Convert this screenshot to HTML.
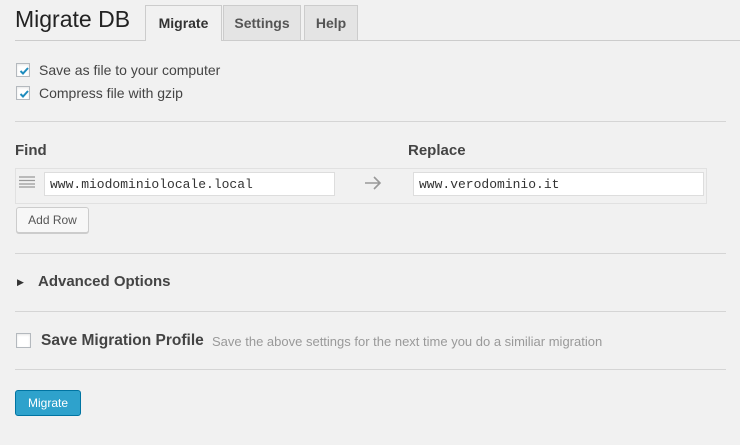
<!DOCTYPE html>
<html><head><style>
body{margin:0;width:740px;height:445px;background:#f1f1f1;font-family:"Liberation Sans",sans-serif;color:#444;position:relative;overflow:hidden}
.a{position:absolute}
.tab{position:absolute;top:5px;height:35px;box-sizing:border-box;border:1px solid #ccc;border-bottom:none;background:#e4e4e4;font-weight:bold;font-size:14px;color:#555;text-align:center;line-height:35px}
.cb{position:absolute;width:14px;height:14px;border:1px solid #b4b9be;background:#fff;box-sizing:border-box;box-shadow:inset 0 1px 2px rgba(0,0,0,.1)}
.cb svg{position:absolute;left:1px;top:1px}
.hr{position:absolute;left:15px;right:14px;height:1px;background:#d5d5d5}
.inp{position:absolute;height:24px;box-sizing:border-box;border:1px solid #ddd;background:#fff;font-family:"Liberation Mono",monospace;font-size:13px;color:#333;line-height:23px;padding-left:5px}
</style></head><body>
<div class="a" style="left:15px;top:6px;font-size:23px;color:#222">Migrate DB</div>
<div class="a" style="left:15px;right:0;top:40px;height:1px;background:#ccc"></div>
<div class="tab" style="left:145px;width:77px;background:#f1f1f1;height:36px;color:#333">Migrate</div>
<div class="tab" style="left:223px;width:78px">Settings</div>
<div class="tab" style="left:304px;width:54px">Help</div>

<div class="cb" style="left:16px;top:63px"><svg width="12" height="12"><path d="M2.5 6l2.5 2.5 5-5.5" stroke="#1e8cbe" stroke-width="2" fill="none"/></svg></div>
<div class="a" style="left:39px;top:62px;font-size:14px">Save as file to your computer</div>
<div class="cb" style="left:16px;top:86px"><svg width="12" height="12"><path d="M2.5 6l2.5 2.5 5-5.5" stroke="#1e8cbe" stroke-width="2" fill="none"/></svg></div>
<div class="a" style="left:39px;top:85px;font-size:14px">Compress file with gzip</div>

<div class="hr" style="top:121px"></div>
<div class="a" style="left:15px;top:142px;font-size:15px;font-weight:bold">Find</div>
<div class="a" style="left:408px;top:142px;font-size:15px;font-weight:bold">Replace</div>
<div class="a" style="left:15px;top:168px;width:692px;height:36px;box-sizing:border-box;border:1px solid #e1e1e1"></div>
<svg class="a" style="left:19px;top:176px" width="16" height="12"><path d="M0 1h16M0 4.5h16M0 8h16M0 11h16" stroke="#999" stroke-width="1.2"/></svg>
<div class="inp" style="left:44px;top:172px;width:291px">www.miodominiolocale.local</div>
<svg class="a" style="left:364px;top:175px" width="18" height="16"><path d="M1 8h15M10 2l6 6-6 6" stroke="#999" stroke-width="1.6" fill="none"/></svg>
<div class="inp" style="left:413px;top:172px;width:291px">www.verodominio.it</div>
<div class="a" style="left:16px;top:207px;width:73px;height:26px;box-sizing:border-box;border:1px solid #ccc;border-radius:3px;background:#f7f7f7;font-size:12px;color:#555;text-align:center;line-height:24px;box-shadow:0 1px 0 #ccc">Add Row</div>

<div class="hr" style="top:253px"></div>
<div class="a" style="left:17px;top:277px;font-size:9px;color:#333">▶</div>
<div class="a" style="left:38px;top:273px;font-size:15px;font-weight:bold">Advanced Options</div>

<div class="hr" style="top:311px"></div>
<div class="cb" style="left:16px;top:333px;width:15px;height:15px"></div>
<div class="a" style="left:41px;top:332px;font-size:15.5px;font-weight:bold">Save Migration Profile</div>
<div class="a" style="left:212px;top:334px;font-size:13px;color:#999">Save the above settings for the next time you do a similiar migration</div>

<div class="hr" style="top:369px"></div>
<div class="a" style="left:15px;top:390px;width:66px;height:26px;box-sizing:border-box;border:1px solid #0074a2;border-radius:3px;background:#2ea2cc;color:#fff;font-size:12px;text-align:center;line-height:24px">Migrate</div>
</body></html>
